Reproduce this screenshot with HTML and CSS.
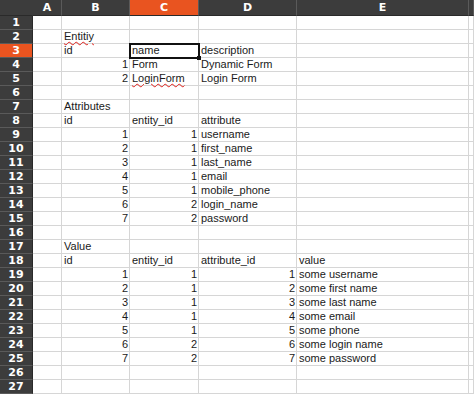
FILE: index.html
```html
<!DOCTYPE html>
<html lang="en">
<head>
  <meta charset="UTF-8">
  <title>Sheet</title>
  <link rel="stylesheet" href="styles.css">
</head>
<body>
  <div class="sheet">
    <div class="row head">
      <div class="corner"></div>
      <div class="ch">A</div>
      <div class="ch">B</div>
      <div class="ch active">C</div>
      <div class="ch">D</div>
      <div class="ch">E</div>
      <div class="ch"></div>
    </div>

    <div class="row"><div class="rh">1</div><div></div><div></div><div></div><div></div><div></div><div></div></div>
    <div class="row"><div class="rh">2</div><div></div><div><span class="typo">Entitiy</span></div><div></div><div></div><div></div><div></div></div>
    <div class="row"><div class="rh active">3</div><div></div><div>id</div><div class="selected">name<span class="handle"></span></div><div>description</div><div></div><div></div></div>
    <div class="row"><div class="rh">4</div><div></div><div class="num">1</div><div>Form</div><div>Dynamic Form</div><div></div><div></div></div>
    <div class="row"><div class="rh">5</div><div></div><div class="num">2</div><div><span class="typo">LoginForm</span></div><div>Login Form</div><div></div><div></div></div>
    <div class="row"><div class="rh">6</div><div></div><div></div><div></div><div></div><div></div><div></div></div>
    <div class="row"><div class="rh">7</div><div></div><div>Attributes</div><div></div><div></div><div></div><div></div></div>
    <div class="row"><div class="rh">8</div><div></div><div>id</div><div>entity_id</div><div>attribute</div><div></div><div></div></div>
    <div class="row"><div class="rh">9</div><div></div><div class="num">1</div><div class="num">1</div><div>username</div><div></div><div></div></div>
    <div class="row"><div class="rh">10</div><div></div><div class="num">2</div><div class="num">1</div><div>first_name</div><div></div><div></div></div>
    <div class="row"><div class="rh">11</div><div></div><div class="num">3</div><div class="num">1</div><div>last_name</div><div></div><div></div></div>
    <div class="row"><div class="rh">12</div><div></div><div class="num">4</div><div class="num">1</div><div>email</div><div></div><div></div></div>
    <div class="row"><div class="rh">13</div><div></div><div class="num">5</div><div class="num">1</div><div>mobile_phone</div><div></div><div></div></div>
    <div class="row"><div class="rh">14</div><div></div><div class="num">6</div><div class="num">2</div><div>login_name</div><div></div><div></div></div>
    <div class="row"><div class="rh">15</div><div></div><div class="num">7</div><div class="num">2</div><div>password</div><div></div><div></div></div>
    <div class="row"><div class="rh">16</div><div></div><div></div><div></div><div></div><div></div><div></div></div>
    <div class="row"><div class="rh">17</div><div></div><div>Value</div><div></div><div></div><div></div><div></div></div>
    <div class="row"><div class="rh">18</div><div></div><div>id</div><div>entity_id</div><div>attribute_id</div><div>value</div><div></div></div>
    <div class="row"><div class="rh">19</div><div></div><div class="num">1</div><div class="num">1</div><div class="num">1</div><div>some username</div><div></div></div>
    <div class="row"><div class="rh">20</div><div></div><div class="num">2</div><div class="num">1</div><div class="num">2</div><div>some first name</div><div></div></div>
    <div class="row"><div class="rh">21</div><div></div><div class="num">3</div><div class="num">1</div><div class="num">3</div><div>some last name</div><div></div></div>
    <div class="row"><div class="rh">22</div><div></div><div class="num">4</div><div class="num">1</div><div class="num">4</div><div>some email</div><div></div></div>
    <div class="row"><div class="rh">23</div><div></div><div class="num">5</div><div class="num">1</div><div class="num">5</div><div>some phone</div><div></div></div>
    <div class="row"><div class="rh">24</div><div></div><div class="num">6</div><div class="num">2</div><div class="num">6</div><div>some login name</div><div></div></div>
    <div class="row"><div class="rh">25</div><div></div><div class="num">7</div><div class="num">2</div><div class="num">7</div><div>some password</div><div></div></div>
    <div class="row"><div class="rh">26</div><div></div><div></div><div></div><div></div><div></div><div></div></div>
    <div class="row"><div class="rh">27</div><div></div><div></div><div></div><div></div><div></div><div></div></div>
  </div>
</body>
</html>
```

FILE: styles.css
```css
/* Spreadsheet grid */
body {
  margin: 0;
  background: #fff;
  overflow: hidden;
}

.sheet {
  font-family: 'Liberation Sans', Arial, sans-serif;
  font-size: 11px;
  color: #1a1a1a;
  width: 100%;
}

.row {
  display: grid;
  grid-template-columns: 33px 29px 68px 69px 98px 172px minmax(0, 1fr);
  height: 14px;
}

.row > div {
  box-sizing: border-box;
  border-right: 1px solid #d6d6d6;
  border-bottom: 1px solid #d6d6d6;
  padding: 0 2px;
  line-height: 13px;
  white-space: nowrap;
  position: relative;
}

.row > .num {
  text-align: right;
  padding-right: 1px;
}

/* Column header */
.head {
  height: 16px;
}

.head > div {
  background: #3c3c3c;
  color: #fff;
  border-right: 1px solid #5a5a5a;
  border-bottom: 1px solid #2a2a2a;
  font-family: 'DejaVu Sans', sans-serif;
  font-size: 11px;
  font-weight: 600;
  line-height: 15px;
  text-align: center;
}

.head > .corner {
  border-right-color: #3c3c3c;
}

/* Row header */
.row > .rh {
  background: #3c3c3c;
  color: #fff;
  border-right: 1px solid #2a2a2a;
  border-bottom: 1px solid #5a5a5a;
  font-family: 'DejaVu Sans', sans-serif;
  font-size: 11px;
  font-weight: 700;
  line-height: 13px;
  text-align: center;
  overflow: hidden;
}

.head > .active,
.row > .rh.active {
  background: #e95420;
  font-weight: 700;
}

/* Selected cell */
.row > .selected {
  outline: 2px solid #111;
  outline-offset: -1px;
  z-index: 1;
}

.handle {
  position: absolute;
  right: -3px;
  bottom: -3px;
  width: 4px;
  height: 4px;
  background: #111;
}

.typo {
  text-decoration: underline wavy #e0201a;
  text-decoration-thickness: 1px;
  text-underline-offset: 1px;
}
```
